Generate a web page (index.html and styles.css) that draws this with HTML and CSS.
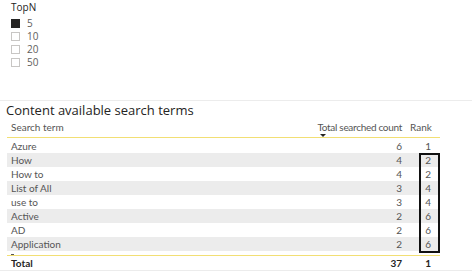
FILE: index.html
```html
<!DOCTYPE html>
<html lang="en">
  <head>
    <meta charset="UTF-8" />
    <title>Search terms</title>
    <link rel="stylesheet" href="styles.css">
  </head>
  <body>
    <div class="slicer">
      <div class="slicer-title">TopN</div>
      <div class="slicer-item"><span class="check checked"></span>5</div>
      <div class="slicer-item"><span class="check"></span>10</div>
      <div class="slicer-item"><span class="check"></span>20</div>
      <div class="slicer-item"><span class="check"></span>50</div>
    </div>

    <div class="visual">
      <h1 class="visual-title">Content available search terms</h1>
      <div class="grid">
        <div class="row head">
          <div class="cell">Search term</div>
          <div class="cell num sorted">Total searched count</div>
          <div class="cell rank">Rank</div>
        </div>
        <div class="body">
          <div class="row"><div class="cell">Azure</div><div class="cell num">6</div><div class="cell rank">1</div></div>
          <div class="row"><div class="cell">How</div><div class="cell num">4</div><div class="cell rank">2</div></div>
          <div class="row"><div class="cell">How to</div><div class="cell num">4</div><div class="cell rank">2</div></div>
          <div class="row"><div class="cell">List of All</div><div class="cell num">3</div><div class="cell rank">4</div></div>
          <div class="row"><div class="cell">use to</div><div class="cell num">3</div><div class="cell rank">4</div></div>
          <div class="row"><div class="cell">Active</div><div class="cell num">2</div><div class="cell rank">6</div></div>
          <div class="row"><div class="cell">AD</div><div class="cell num">2</div><div class="cell rank">6</div></div>
          <div class="row"><div class="cell">Application</div><div class="cell num">2</div><div class="cell rank">6</div></div>
          <!-- next row, scrolled out of view -->
          <div class="row peek"><span class="peek-mark"></span></div>
          <!-- highlight around the tied ranks -->
          <div class="rank-box"></div>
        </div>
        <div class="row total">
          <div class="cell">Total</div>
          <div class="cell num">37</div>
          <div class="cell rank">1</div>
        </div>
      </div>
    </div>
  </body>
</html>
```

FILE: styles.css
```css
body {
  margin: 0;
  font-family: "Open Sans", "Noto Sans", sans-serif;
  color: #605e5c;
  background: #fff;
  width: 474px;
  height: 276px;
  overflow: hidden;
}

/* TopN slicer */
.slicer {
  height: 100px;
  padding-left: 11px;
  box-sizing: border-box;
}
.slicer-title {
  font-size: 10px;
  line-height: 14px;
  color: #252423;
  height: 17px;
}
.slicer-item {
  display: flex;
  align-items: center;
  gap: 7px;
  font-size: 10px;
  line-height: 13px;
  height: 13px;
}
.check {
  width: 7px;
  height: 7px;
  border: 1px solid #c8c6c4;
}
.check.checked {
  background: #252423;
  border-color: #252423;
}

/* table visual */
.visual {
  border-top: 1px solid #ececec;
  border-bottom: 1px solid #ececec;
  width: 472px;
  padding-left: 7px;
  box-sizing: border-box;
}
.visual-title {
  margin: 0;
  font-size: 13px;
  font-weight: normal;
  color: #252423;
  line-height: 16px;
  padding-top: 1px;
  height: 17px;
  margin-left: -1px;
}
.grid {
  width: 433px;
  font-family: Lato, "Open Sans", sans-serif;
  font-size: 10px;
  color: #555;
}
.row {
  display: grid;
  grid-template-columns: 1fr 100px 34px;
  height: 14px;
  line-height: 14px;
}
.cell {
  padding-left: 4px;
  white-space: nowrap;
}
.num {
  text-align: right;
  padding-right: 4px;
}
.rank {
  text-align: right;
  padding-right: 9px;
}
.head {
  height: 18px;
  line-height: 16px;
  border-bottom: 1px solid #f2df74;
  margin-bottom: 1px;
}
.sorted {
  position: relative;
  letter-spacing: -0.3px;
}
.sorted::after {
  content: "";
  position: absolute;
  left: 14px;
  top: 15px;
  border-left: 3px solid transparent;
  border-right: 3px solid transparent;
  border-top: 3px solid #252423;
}
.body {
  height: 116px;
  overflow: hidden;
  position: relative;
}
.body .row:nth-child(even) {
  background: #ececec;
}
.peek-mark {
  width: 3px;
  height: 1px;
  margin: 3px 0 0 4px;
  background: #555;
}
.rank-box {
  position: absolute;
  left: 412px;
  top: 14px;
  width: 17px;
  height: 96px;
  border: 2px solid #111;
}
.total {
  border-top: 1px solid #f2df74;
  font-weight: bold;
  color: #252423;
}
```
